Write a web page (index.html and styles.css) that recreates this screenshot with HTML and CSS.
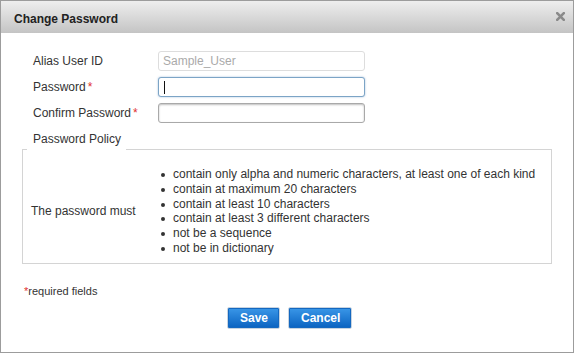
FILE: index.html
```html
<!DOCTYPE html>
<html>
<head>
<meta charset="utf-8">
<link rel="stylesheet" href="styles.css">
</head>
<body>
<div class="dialog">
  <div class="titlebar">
    <span class="title">Change Password</span>
    <svg class="close" width="9" height="9" viewBox="0 0 9 9"><path d="M1.2 1.2 L7.8 7.8 M7.8 1.2 L1.2 7.8" stroke="#8a8a8a" stroke-width="2.6" stroke-linecap="square"/></svg>
  </div>
  <div class="content">
    <div class="form">
      <div class="label">Alias User ID</div>
      <div class="field disabled">Sample_User</div>
      <div class="label">Password<span class="req">*</span></div>
      <div class="field focused"><span class="caret"></span></div>
      <div class="label">Confirm Password<span class="req">*</span></div>
      <div class="field normal"></div>
    </div>
    <fieldset class="policy">
      <legend>Password Policy</legend>
      <div class="policy-body">
        <div class="policy-lead">The password must</div>
        <ul class="rules">
          <li>contain only alpha and numeric characters, at least one of each kind</li>
          <li>contain at maximum 20 characters</li>
          <li>contain at least 10 characters</li>
          <li>contain at least 3 different characters</li>
          <li>not be a sequence</li>
          <li>not be in dictionary</li>
        </ul>
      </div>
    </fieldset>
    <div class="note"><span class="req">*</span>required fields</div>
    <div class="actions">
      <button class="btn save">Save</button>
      <button class="btn cancel">Cancel</button>
    </div>
  </div>
</div>
</body>
</html>
```
FILE: styles.css
```css
html, body {
  margin: 0;
  padding: 0;
  background: #ffffff;
}
body {
  font-family: "Liberation Sans", Arial, sans-serif;
  font-size: 12px;
  color: #333333;
}
.dialog {
  box-sizing: border-box;
  width: 574px;
  height: 353px;
  border: 1px solid #9c9c9c;
  background: #ffffff;
  display: flex;
  flex-direction: column;
}
.titlebar {
  box-sizing: border-box;
  height: 32px;
  flex: none;
  display: flex;
  align-items: center;
  justify-content: space-between;
  padding: 3px 8px 0 13px;
  background: linear-gradient(#eeeeee, #c4c4c4);
}
.title {
  font-weight: bold;
  font-size: 12px;
  color: #222222;
}
.close {
  display: block;
  margin-top: -5px;
}
.content {
  padding-top: 18px;
  display: flex;
  flex-direction: column;
}
.form {
  display: grid;
  grid-template-columns: 125px 207px;
  grid-auto-rows: 20px;
  row-gap: 6px;
  padding-left: 32px;
  align-items: center;
}
.label {
  line-height: 20px;
  color: #333333;
}
.req {
  color: #e03030;
  margin-left: 2px;
}
.field {
  box-sizing: border-box;
  height: 20px;
  border-radius: 3px;
  background: #ffffff;
  padding-left: 4px;
  line-height: 18px;
  display: flex;
  align-items: center;
}
.field.disabled {
  border: 1px solid #dddddd;
  color: #aaaaaa;
}
.field.focused {
  border: 1px solid #7ca4c6;
  box-shadow: 0 0 2px rgba(90, 140, 190, 0.6);
  padding-left: 5px;
}
.caret {
  display: block;
  width: 1px;
  height: 13px;
  background: #111111;
}
.field.normal {
  border: 1px solid #a9a9a9;
  box-shadow: inset 0 1px 2px rgba(0, 0, 0, 0.25);
}
.policy {
  margin: 9px 0 0 21px;
  width: 530px;
  box-sizing: border-box;
  padding: 0 0 7px 0;
  border: 1px solid #d4d4d4;
  min-width: 0;
}
.policy legend {
  margin-left: 4px;
  padding: 0 5px 20px 6px;
  line-height: 14px;
  font-size: 12px;
  color: #333333;
}
.policy-body {
  display: flex;
  align-items: center;
  padding: 1px 0 0 8px;
}
.policy-lead {
  width: 130px;
  flex: none;
}
.rules {
  list-style: none;
  margin: 0;
  padding: 0;
}
.rules li {
  position: relative;
  padding-left: 12px;
  line-height: 14.8px;
  white-space: nowrap;
}
.rules li::before {
  content: "";
  position: absolute;
  left: 0;
  top: 6px;
  width: 4px;
  height: 4px;
  border-radius: 50%;
  background: #333333;
}
.note {
  margin-top: 21px;
  padding-left: 23px;
  font-size: 11px;
  line-height: 13px;
  color: #333333;
}
.note .req {
  margin-left: 0;
  margin-right: 0;
}
.actions {
  margin-top: 9px;
  display: flex;
  justify-content: center;
  gap: 8px;
  padding-left: 5px;
}
.btn {
  box-sizing: border-box;
  height: 22px;
  padding: 0 12px;
  border: 1px solid #c8d4e0;
  border-radius: 2px;
  background: linear-gradient(#3a97e8, #0a62c0);
  box-shadow: inset 0 0 0 1px #1468c0;
  color: #ffffff;
  font-family: "Liberation Sans", Arial, sans-serif;
  font-weight: bold;
  font-size: 12px;
  line-height: 20px;
  cursor: pointer;
}
.btn.save {
  width: 53px;
}
.btn.cancel {
  width: 64px;
}
```
